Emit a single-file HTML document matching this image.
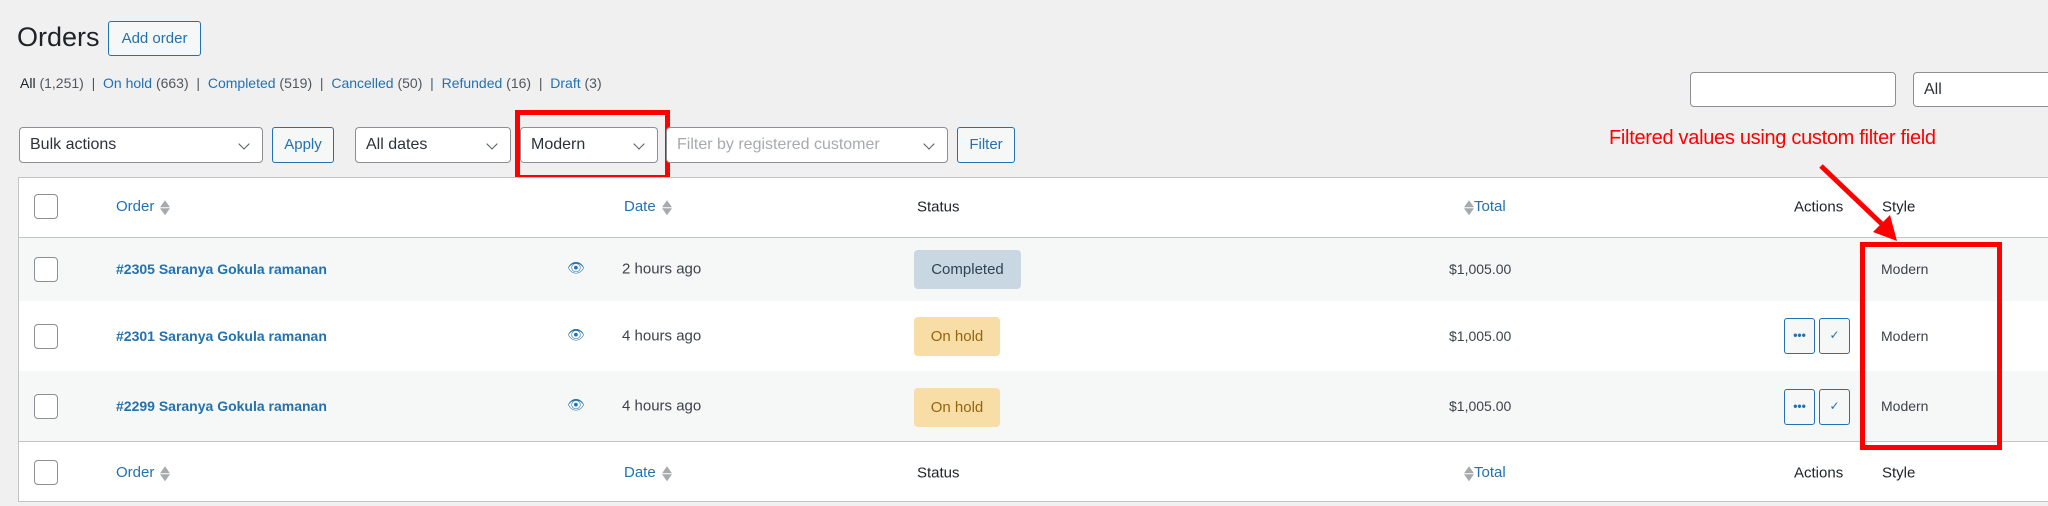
<!DOCTYPE html>
<html><head><meta charset="utf-8"><style>
*{box-sizing:border-box;margin:0;padding:0}
body{width:2048px;height:506px;background:#f0f0f1;font-family:"Liberation Sans",sans-serif;color:#3c434a;position:relative;overflow:hidden;font-size:15px}
.a{position:absolute;white-space:nowrap}
a,.lnk{color:#2271b1;text-decoration:none}
.sel{position:absolute;background:#fff;border:1px solid #8c8f94;border-radius:4px;height:36px;padding:0 10px;line-height:34px;font-size:16px;color:#2c3338}
.dd:after{content:"";position:absolute;right:14px;top:12px;width:7px;height:7px;border-right:1.6px solid #50575e;border-bottom:1.6px solid #50575e;transform:rotate(45deg)}
.btn{position:absolute;border:1px solid #2271b1;color:#2271b1;background:#f6f7f7;border-radius:3px;font-size:15px;text-align:center}
.cb{position:absolute;left:34px;width:24px;height:25px;border:1px solid #8c8f94;border-radius:4px;background:#fff}
.row{position:absolute;left:19px;right:0}
.t{position:absolute;font-size:15px;transform:translateY(-50%)}
.arr{display:inline-block;width:8px;vertical-align:middle;margin-left:6px}
.arr i{display:block;width:0;height:0;border-left:5px solid transparent;border-right:5px solid transparent;margin:1px 0}
.up{border-bottom:7px solid #a7aaad}.dn{border-top:7px solid #a7aaad}
.badge{position:absolute;border-radius:4px;font-size:15px;text-align:center;line-height:39px;height:39px}
.ab{position:absolute;width:31px;height:36px;border:1px solid #2271b1;border-radius:3px;background:#f6f7f7;color:#2271b1;text-align:center;line-height:32px;font-size:12px}
</style></head><body>
<div class="a" style="left:17px;top:22px;font-size:27px;color:#1d2327">Orders</div>
<div class="btn" style="left:108px;top:21px;width:93px;height:35px;line-height:33px">Add order</div>
<div class="a" style="left:20px;top:75px;font-size:14px;color:#50575e"><b style="color:#1d2327;font-weight:normal">All</b> (1,251) &nbsp;|&nbsp; <a>On hold</a> (663) &nbsp;|&nbsp; <a>Completed</a> (519) &nbsp;|&nbsp; <a>Cancelled</a> (50) &nbsp;|&nbsp; <a>Refunded</a> (16) &nbsp;|&nbsp; <a>Draft</a> (3)</div>
<div class="sel" style="left:1690px;top:72px;width:206px;height:35px"></div>
<div class="sel dd" style="left:1913px;top:72px;width:160px;height:35px">All</div>

<div class="sel dd" style="left:19px;top:127px;width:244px">Bulk actions</div>
<div class="btn" style="left:272px;top:127px;width:62px;height:36px;line-height:34px">Apply</div>
<div class="sel dd" style="left:355px;top:127px;width:156px">All dates</div>
<div class="sel dd" style="left:520px;top:127px;width:138px">Modern</div>
<div class="a" style="left:515px;top:110px;width:155px;height:70px;border:5px solid #f00"></div>
<div class="sel dd" style="left:666px;top:127px;width:282px;color:#a7aaad">Filter by registered customer</div>
<div class="btn" style="left:957px;top:127px;width:58px;height:36px;line-height:34px">Filter</div>

<div class="a" style="left:1609px;top:127px;font-size:20px;color:#f00;letter-spacing:-0.3px">Filtered values using custom filter field</div>
<svg class="a" style="left:0;top:0;z-index:5" width="2048" height="506"><line x1="1821" y1="166" x2="1886" y2="228" stroke="#f00" stroke-width="5"/><polygon points="1897,241 1873,232 1890,215" fill="#f00"/></svg>

<div class="a" style="left:18px;top:177px;width:2040px;height:325px;background:#fff;border:1px solid #c3c4c7"></div>
<div class="row" style="top:237px;height:64px;background:#f6f7f7;border-top:1px solid #c3c4c7"></div>
<div class="row" style="top:371px;height:70px;background:#f6f7f7"></div>
<div class="row" style="top:441px;height:1px;background:#c3c4c7"></div>

<div class="cb" style="top:194px"></div>
<div class="t lnk" style="left:116px;top:207px">Order<span class="arr"><i class="up"></i><i class="dn"></i></span></div>
<div class="t lnk" style="left:624px;top:207px">Date<span class="arr"><i class="up"></i><i class="dn"></i></span></div>
<div class="t" style="left:917px;top:207px;color:#1d2327">Status</div>
<div class="t lnk" style="left:1464px;top:207px"><span class="arr" style="margin:0 2px 0 0"><i class="up"></i><i class="dn"></i></span>Total</div>
<div class="t" style="left:1794px;top:207px;color:#1d2327">Actions</div>
<div class="t" style="left:1882px;top:207px;color:#1d2327">Style</div>

<div class="cb" style="top:257px"></div>
<div class="t lnk" style="left:116px;top:269px;font-weight:bold;font-size:14px">#2305 Saranya Gokula ramanan</div>
<div class="t lnk" style="left:567px;top:268px;font-size:14px">👁</div>
<div class="t" style="left:622px;top:269px">2 hours ago</div>
<div class="badge" style="left:914px;top:250px;width:107px;background:#c8d7e1;color:#2e4453">Completed</div>
<div class="t" style="left:1449px;top:269px;font-size:14px">$1,005.00</div>
<div class="t" style="left:1881px;top:269px;font-size:14px">Modern</div>

<div class="cb" style="top:324px"></div>
<div class="t lnk" style="left:116px;top:336px;font-weight:bold;font-size:14px">#2301 Saranya Gokula ramanan</div>
<div class="t lnk" style="left:567px;top:335px;font-size:14px">👁</div>
<div class="t" style="left:622px;top:336px">4 hours ago</div>
<div class="badge" style="left:914px;top:317px;width:86px;background:#f8dda7;color:#94660c">On hold</div>
<div class="t" style="left:1449px;top:336px;font-size:14px">$1,005.00</div>
<div class="ab" style="left:1784px;top:318px;font-weight:bold">•••</div>
<div class="ab" style="left:1819px;top:318px">✓</div>
<div class="t" style="left:1881px;top:336px;font-size:14px">Modern</div>

<div class="cb" style="top:394px"></div>
<div class="t lnk" style="left:116px;top:406px;font-weight:bold;font-size:14px">#2299 Saranya Gokula ramanan</div>
<div class="t lnk" style="left:567px;top:405px;font-size:14px">👁</div>
<div class="t" style="left:622px;top:406px">4 hours ago</div>
<div class="badge" style="left:914px;top:388px;width:86px;background:#f8dda7;color:#94660c">On hold</div>
<div class="t" style="left:1449px;top:406px;font-size:14px">$1,005.00</div>
<div class="ab" style="left:1784px;top:389px;font-weight:bold">•••</div>
<div class="ab" style="left:1819px;top:389px">✓</div>
<div class="t" style="left:1881px;top:406px;font-size:14px">Modern</div>

<div class="a" style="left:1860px;top:242px;width:142px;height:208px;border:5px solid #f00"></div>

<div class="cb" style="top:460px"></div>
<div class="t lnk" style="left:116px;top:473px">Order<span class="arr"><i class="up"></i><i class="dn"></i></span></div>
<div class="t lnk" style="left:624px;top:473px">Date<span class="arr"><i class="up"></i><i class="dn"></i></span></div>
<div class="t" style="left:917px;top:473px;color:#1d2327">Status</div>
<div class="t lnk" style="left:1464px;top:473px"><span class="arr" style="margin:0 2px 0 0"><i class="up"></i><i class="dn"></i></span>Total</div>
<div class="t" style="left:1794px;top:473px;color:#1d2327">Actions</div>
<div class="t" style="left:1882px;top:473px;color:#1d2327">Style</div>
</body></html>
